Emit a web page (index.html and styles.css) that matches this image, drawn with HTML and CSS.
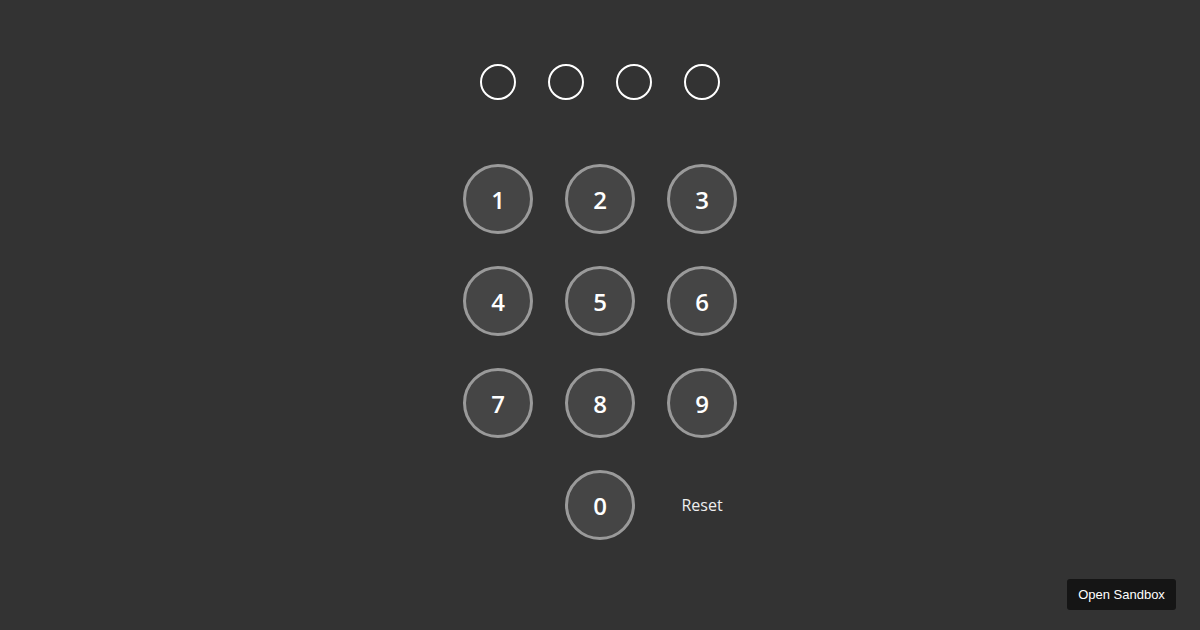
FILE: index.html
```html
<!DOCTYPE html>
<html>
<head>
<meta charset="utf-8">
<link rel="stylesheet" href="styles.css">
</head>
<body>
<main class="app">
  <div class="dots">
    <span class="dot"></span><span class="dot"></span><span class="dot"></span><span class="dot"></span>
  </div>
  <div class="pad">
    <button class="key">1</button>
    <button class="key">2</button>
    <button class="key">3</button>
    <button class="key">4</button>
    <button class="key">5</button>
    <button class="key">6</button>
    <button class="key">7</button>
    <button class="key">8</button>
    <button class="key">9</button>
    <span class="empty"></span>
    <button class="key">0</button>
    <button class="reset">Reset</button>
  </div>
</main>
<a class="sandbox">Open Sandbox</a>
</body>
</html>
```
FILE: styles.css
```css
html, body {
  margin: 0;
  padding: 0;
  background: #333333;
  width: 1200px;
  height: 630px;
  overflow: hidden;
  font-family: "Open Sans", sans-serif;
}
.app {
  display: flex;
  flex-direction: column;
  align-items: center;
  padding-top: 64px;
}
.dots {
  display: flex;
  gap: 32px;
}
.dot {
  width: 36px;
  height: 36px;
  box-sizing: border-box;
  border: 2px solid #ffffff;
  border-radius: 50%;
}
.pad {
  margin-top: 64px;
  display: grid;
  grid-template-columns: repeat(3, 70px);
  grid-auto-rows: 70px;
  gap: 32px;
}
.key {
  width: 70px;
  height: 70px;
  box-sizing: border-box;
  border: 3px solid #9a9a9a;
  border-radius: 50%;
  background: #454545;
  color: #ffffff;
  font-family: "Open Sans", sans-serif;
  font-weight: 600;
  font-size: 24px;
  padding: 0;
  display: flex;
  align-items: center;
  justify-content: center;
}
.reset {
  background: none;
  border: none;
  color: #eeeeee;
  font-family: "Open Sans", sans-serif;
  font-size: 16px;
  padding: 0;
}
.sandbox {
  position: absolute;
  left: 1067px;
  top: 579px;
  width: 109px;
  height: 31px;
  box-sizing: border-box;
  background: #151515;
  color: #ffffff;
  border-radius: 3px;
  font-family: "Liberation Sans", Arial, sans-serif;
  font-size: 13px;
  display: flex;
  align-items: center;
  justify-content: center;
}
```
